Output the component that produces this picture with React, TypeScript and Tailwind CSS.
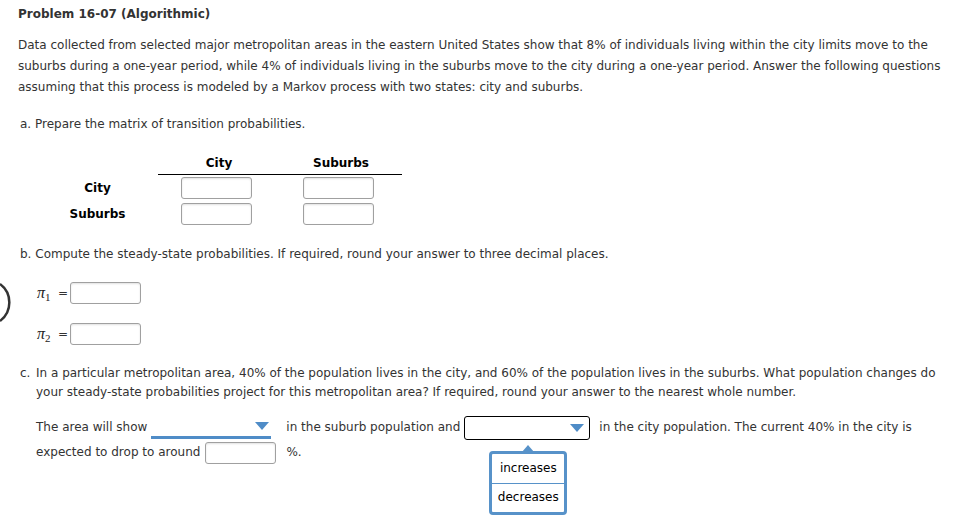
import React from "react";

function Box({ className = "" }: { className?: string }) {
  return (
    <div
      className={`h-[22px] w-[71px] rounded-[3px] border border-[#a0a0a0] bg-white shadow-[inset_0_1px_2px_rgba(0,0,0,0.12)] ${className}`}
    />
  );
}

function Caret() {
  return (
    <svg width="14" height="8" viewBox="0 0 14 8" className="shrink-0">
      <path d="M0 0 H14 L7 8 Z" fill="#4f8cc7" />
    </svg>
  );
}

function Pi({ n }: { n: number }) {
  return (
    <div className="flex h-[22px] items-center">
      <span className="w-[21px] font-['Liberation_Serif',serif] text-[16px] italic leading-[22px] text-[#222]">
        π<sub className="not-italic text-[11px]">{n}</sub>
      </span>
      <span className="w-[12px] text-[12px]">=</span>
      <Box />
    </div>
  );
}

export default function App() {
  return (
    <div className="relative h-[532px] w-[964px] overflow-hidden bg-white pl-[18px] pt-[4px] font-['DejaVu_Sans',sans-serif] text-[12px] leading-[21px] text-[#333]">
      <svg width="12" height="44" viewBox="0 0 12 44" className="absolute left-0 top-[281px]">
        <path d="M0 3 A 23 23 0 0 1 0 40" fill="none" stroke="#333" strokeWidth="2.5" />
      </svg>

      <h1 className="font-bold">Problem 16-07 (Algorithmic)</h1>

      <p className="mt-[10px] pr-[8px]">
        Data collected from selected major metropolitan areas in the eastern United States show that 8% of individuals living within the city limits move to the suburbs during a one-year period, while 4% of individuals living in the suburbs move to the city during a one-year period. Answer the following questions assuming that this process is modeled by a Markov process with two states: city and suburbs.
      </p>

      <p className="mt-[16px] pl-[2px]">a. Prepare the matrix of transition probabilities.</p>

      <div className="mt-[18px] ml-[19px] w-[365px] text-black">
        <div className="flex">
          <div className="w-[121px]" />
          <div className="flex h-[22px] flex-1 border-b border-black font-bold">
            <div className="w-[122px] text-center">City</div>
            <div className="w-[122px] text-center">Suburbs</div>
          </div>
        </div>
        <div className="mt-[2px] flex flex-col gap-[4px]">
          {["City", "Suburbs"].map((r) => (
            <div key={r} className="flex h-[22px] items-center">
              <div className="w-[121px] text-center font-bold">{r}</div>
              <div className="flex w-[122px] justify-center pr-[6px]">
                <Box />
              </div>
              <div className="flex w-[122px] justify-center pr-[6px]">
                <Box />
              </div>
            </div>
          ))}
        </div>
      </div>

      <p className="mt-[19px] pl-[2px]">b. Compute the steady-state probabilities. If required, round your answer to three decimal places.</p>

      <div className="mt-[17px] ml-[19px] flex flex-col gap-[19px]">
        <Pi n={1} />
        <Pi n={2} />
      </div>

      <div className="mt-[19px] flex pl-[2px] leading-[19px]">
        <span className="w-[16px] shrink-0">c.</span>
        <p>
          In a particular metropolitan area, 40% of the population lives in the city, and 60% of the population lives in the suburbs. What population changes do your steady-state probabilities project for this metropolitan area? If required, round your answer to the nearest whole number.
        </p>
      </div>

      <div className="mt-[13px] pl-[18px]">
        <div className="flex h-[25px] items-center whitespace-nowrap">
          <span>The area will show</span>
          <div className="ml-[4px] flex h-[22px] w-[120px] items-center justify-end border-b-[3px] border-[#4f8cc7] pr-[2px]">
            <Caret />
          </div>
          <span className="ml-[15px]">in the suburb population and</span>
          <div className="relative ml-[4px] flex h-[24px] w-[126px] items-center justify-end rounded-[3px] border-[1.5px] border-black pr-[5px]">
            <Caret />
            <div className="absolute left-[24px] top-[34px] w-[78px] rounded-[4px] border-[3px] border-[#5792c9] bg-white text-center leading-[27px] text-black">
              <svg width="12" height="7" viewBox="0 0 12 7" className="absolute left-1/2 top-[-9px] -translate-x-1/2">
                <path d="M0 7 L6 0 L12 7 Z" fill="#5792c9" />
              </svg>
              <div className="border-b border-[#5792c9] py-[1px]">increases</div>
              <div className="py-[0.5px]">decreases</div>
            </div>
          </div>
          <span className="ml-[9px]">in the city population. The current 40% in the city is</span>
        </div>
        <div className="flex h-[25px] items-center whitespace-nowrap">
          <span>expected to drop to around</span>
          <Box className="ml-[5px]" />
          <span className="ml-[10px]">%.</span>
        </div>
      </div>
    </div>
  );
}
